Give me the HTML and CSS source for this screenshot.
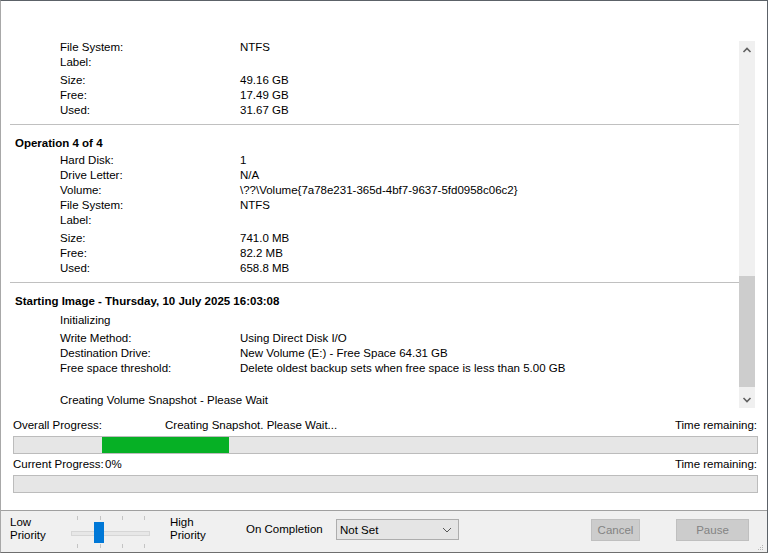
FILE: index.html
```html
<!DOCTYPE html>
<html lang="en">
<head>
  <meta charset="UTF-8">
  <title>Backup progress</title>
  <link rel="stylesheet" href="styles.css">
</head>
<body>
<div class="window">

  <!-- Log -->
  <div class="log">
    <div class="log-text">
      <div class="rows">
        <div class="row"><span class="k">File System:</span><span>NTFS</span></div>
        <div class="row"><span class="k">Label:</span><span></span></div>
        <div class="row gap"><span class="k">Size:</span><span>49.16 GB</span></div>
        <div class="row"><span class="k">Free:</span><span>17.49 GB</span></div>
        <div class="row"><span class="k">Used:</span><span>31.67 GB</span></div>
      </div>
      <div class="sep"></div>

      <div class="heading">Operation 4 of 4</div>
      <div class="rows">
        <div class="row"><span class="k">Hard Disk:</span><span>1</span></div>
        <div class="row"><span class="k">Drive Letter:</span><span>N/A</span></div>
        <div class="row"><span class="k">Volume:</span><span>\??\Volume{7a78e231-365d-4bf7-9637-5fd0958c06c2}</span></div>
        <div class="row"><span class="k">File System:</span><span>NTFS</span></div>
        <div class="row"><span class="k">Label:</span><span></span></div>
        <div class="row gap"><span class="k">Size:</span><span>741.0 MB</span></div>
        <div class="row"><span class="k">Free:</span><span>82.2 MB</span></div>
        <div class="row"><span class="k">Used:</span><span>658.8 MB</span></div>
      </div>
      <div class="sep"></div>

      <div class="heading">Starting Image - Thursday, 10 July 2025 16:03:08</div>
      <div class="rows spaced">
        <div class="row"><span class="k">Initializing</span></div>
        <div class="row gap"><span class="k">Write Method:</span><span>Using Direct Disk I/O</span></div>
        <div class="row"><span class="k">Destination Drive:</span><span>New Volume (E:) - Free Space 64.31 GB</span></div>
        <div class="row"><span class="k">Free space threshold:</span><span>Delete oldest backup sets when free space is less than 5.00 GB</span></div>
        <div class="row wait"><span>Creating Volume Snapshot - Please Wait</span></div>
      </div>
    </div>

    <div class="scrollbar">
      <svg class="arrow" width="16" height="17" viewBox="0 0 16 17">
        <path d="M4.5 11 L8 7.5 L11.5 11" fill="none" stroke="#606060" stroke-width="1.6"/>
      </svg>
      <div class="thumb"></div>
      <svg class="arrow" width="16" height="17" viewBox="0 0 16 17">
        <path d="M4.5 7 L8 10.5 L11.5 7" fill="none" stroke="#606060" stroke-width="1.6"/>
      </svg>
    </div>
  </div>

  <!-- Прогресс -->
  <div class="progress">
    <div class="progress-line">
      <span class="p-label">Overall Progress:</span>
      <span class="p-status">Creating Snapshot. Please Wait...</span>
      <span class="p-time">Time remaining:</span>
    </div>
    <div class="bar"><div class="chunk"></div></div>

    <div class="progress-line second">
      <span class="p-label short">Current Progress:</span>
      <span class="p-status">0%</span>
      <span class="p-time">Time remaining:</span>
    </div>
    <div class="bar"></div>
  </div>

  <!-- Нижняя панель -->
  <div class="panel">
    <div class="prio low">Low<br>Priority</div>
    <svg class="slider" width="79" height="36" viewBox="0 0 79 36">
      <g stroke="#c4c4c4" stroke-width="1">
        <line x1="6.5" y1="2" x2="6.5" y2="6"/>
        <line x1="29.5" y1="2" x2="29.5" y2="6"/>
        <line x1="51.5" y1="2" x2="51.5" y2="6"/>
        <line x1="73.5" y1="2" x2="73.5" y2="6"/>
        <line x1="6.5" y1="30" x2="6.5" y2="34"/>
        <line x1="29.5" y1="30" x2="29.5" y2="34"/>
        <line x1="51.5" y1="30" x2="51.5" y2="34"/>
        <line x1="73.5" y1="30" x2="73.5" y2="34"/>
      </g>
      <rect x="0.5" y="17.5" width="78" height="4" fill="#e7e7e7" stroke="#d6d6d6"/>
      <rect x="23" y="8" width="10" height="21" fill="#0078d7"/>
    </svg>
    <div class="prio high">High<br>Priority</div>
    <div class="on-completion">On Completion</div>
    <div class="select">
      <span>Not Set</span>
      <svg width="10" height="6" viewBox="0 0 10 6">
        <path d="M1 1 L5 5 L9 1" fill="none" stroke="#555" stroke-width="1"/>
      </svg>
    </div>
    <button class="btn cancel" disabled>Cancel</button>
    <button class="btn pause" disabled>Pause</button>
    <svg class="grip" width="7" height="7" viewBox="0 0 7 7">
      <g fill="#b5b5b5">
        <rect x="5" y="1" width="1" height="1"/>
        <rect x="3" y="3" width="1" height="1"/><rect x="5" y="3" width="1" height="1"/>
        <rect x="1" y="5" width="1" height="1"/><rect x="3" y="5" width="1" height="1"/><rect x="5" y="5" width="1" height="1"/>
      </g>
    </svg>
  </div>

</div>
</body>
</html>
```

FILE: styles.css
```css
body {
  margin: 0;
  padding: 0;
  background: #fff;
  font-family: 'Liberation Sans', Arial, sans-serif;
  font-size: 11.5px;
  color: #000;
}

.window {
  width: 768px;
  height: 553px;
  box-sizing: border-box;
  border-top: 1px solid #5c6268;
  border-right: 1px solid #5c6268;
  border-bottom: 1px solid #6e6e6e;
  border-left: 1px solid #a8a8a8;
  display: flex;
  flex-direction: column;
  overflow: hidden;
}

/* Лог */
.log {
  height: 409px;
  display: flex;
  background: #fff;
}
.log-text {
  flex: 1;
  padding: 39px 0 0 9px;
  line-height: 15px;
  white-space: nowrap;
  overflow: hidden;
}
.rows {
  margin-left: 50px;
}
.rows.spaced {
  padding-top: 2px;
}
.row {
  display: flex;
  height: 15px;
}
.row .k {
  width: 180px;
  flex-shrink: 0;
}
.row.gap {
  margin-top: 3px;
}
.row.wait {
  margin-top: 17px;
}
.sep {
  height: 1px;
  background: #c0c0c0;
  margin: 6px 0 10px;
}
.heading {
  margin: 0 0 2px 5px;
  font-weight: bold;
  line-height: 16px;
}

.scrollbar {
  width: 16px;
  height: 367px;
  margin: 40px 12px 0 0;
  background: #f0f0f0;
  display: flex;
  flex-direction: column;
}
.arrow {
  display: block;
}
.thumb {
  margin: auto 0 4px 0;
  height: 111px;
  background: #cdcdcd;
}

/* Прогресс */
.progress {
  height: 100px;
  padding: 8px 9px 0 12px;
  box-sizing: border-box;
}
.progress-line {
  display: flex;
  height: 15px;
  line-height: 15px;
  white-space: nowrap;
}
.progress-line.second {
  margin-top: 3px;
}
.p-label {
  width: 152px;
  flex-shrink: 0;
}
.p-label.short {
  width: 92px;
}
.p-time {
  margin-left: auto;
  margin-right: 1px;
}
.bar {
  margin-top: 3px;
  height: 18px;
  box-sizing: border-box;
  border: 1px solid #bcbcbc;
  background: #e6e6e6;
  padding-left: 88px;
}
.chunk {
  width: 127px;
  height: 16px;
  background: #06b025;
}

/* Нижняя панель */
.panel {
  flex: 1;
  border-top: 1px solid #a0a0a0;
  background: #f0f0f0;
  display: flex;
  align-items: flex-start;
  padding: 0 18px 0 9px;
  position: relative;
}
.prio {
  margin-top: 5px;
  line-height: 13px;
}
.prio.low {
  width: 61px;
}
.slider {
  display: block;
  margin-top: 3px;
}
.prio.high {
  width: 76px;
  margin-left: 20px;
}
.on-completion {
  width: 90px;
  margin-top: 11px;
  line-height: 15px;
}
.select {
  width: 123px;
  height: 21px;
  margin-top: 8px;
  box-sizing: border-box;
  border: 1px solid #adadad;
  background: #e5e5e5;
  display: flex;
  align-items: center;
  justify-content: space-between;
  padding: 0 6px 0 3px;
}
.btn {
  height: 22px;
  margin-top: 8px;
  box-sizing: border-box;
  border: 1px solid #bfbfbf;
  background: #cccccc;
  color: #838383;
  font-family: 'Liberation Sans', Arial, sans-serif;
  font-size: 11.5px;
  padding: 0;
}
.btn.cancel {
  width: 49px;
  margin-left: auto;
}
.btn.pause {
  width: 73px;
  margin-left: 36px;
}
.grip {
  position: absolute;
  right: 3px;
  bottom: 1px;
}
```
